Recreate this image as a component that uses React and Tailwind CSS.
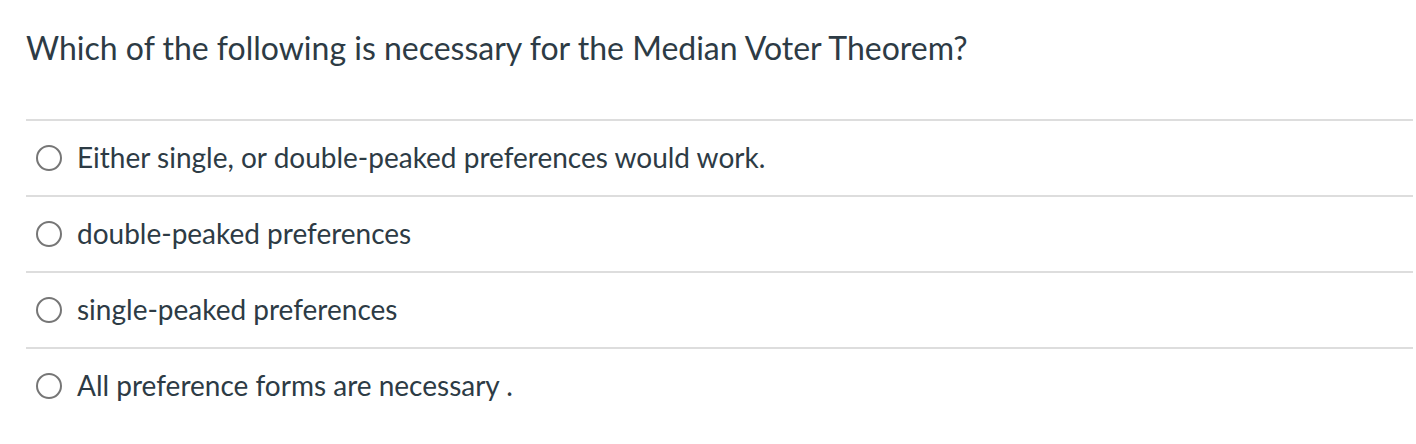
import React from 'react';

const options = [
  'Either single, or double-peaked preferences would work.',
  'double-peaked preferences',
  'single-peaked preferences',
  'All preference forms are necessary .',
];

const Radio = () => (
  <span className="w-[26px] h-[26px] rounded-full border-2 border-[#767676] bg-white shrink-0" />
);

export default function App() {
  return (
    <div className="min-h-screen bg-white pl-[26px] pr-[3px] text-[#2d3b45]" style={{ fontFamily: 'Lato, "Open Sans", sans-serif' }}>
      {/* Question text */}
      <div className="pt-[28px] pb-[51px]">
        <p className="text-[32px] leading-[40px]">Which of the following is necessary for the Median Voter Theorem?</p>
      </div>

      {/* Answers */}
      <div>
        {options.map((opt) => (
          <label key={opt} className="flex items-center h-[76px] border-t-2 border-[#dddddd] pl-[10px]">
            <Radio />
            <span className="ml-[15px] text-[28px] leading-[32px] -mt-[2px]">{opt}</span>
          </label>
        ))}
      </div>
    </div>
  );
}
